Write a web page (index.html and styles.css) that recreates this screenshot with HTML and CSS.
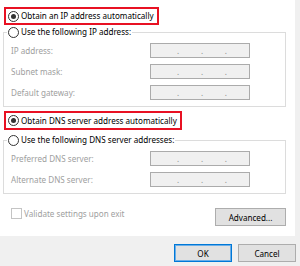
FILE: index.html
```html
<!DOCTYPE html>
<html lang="en">
<head>
  <meta charset="UTF-8">
  <title>IPv4 Properties</title>
  <link rel="stylesheet" href="styles.css">
</head>
<body>
  <div class="dialog">
    <div class="page">
      <label class="choice marked"><span class="radio checked"></span>Obtain an IP address automatically</label>

      <fieldset class="group">
        <legend class="choice"><span class="radio"></span>Use the following IP address:</legend>
        <div class="field">
          <span class="label">IP address:</span>
          <span class="ip"><span>.</span><span>.</span><span>.</span></span>
        </div>
        <div class="field">
          <span class="label">Subnet mask:</span>
          <span class="ip"><span>.</span><span>.</span><span>.</span></span>
        </div>
        <div class="field">
          <span class="label">Default gateway:</span>
          <span class="ip"><span>.</span><span>.</span><span>.</span></span>
        </div>
      </fieldset>

      <label class="choice marked second"><span class="radio checked"></span>Obtain DNS server address automatically</label>

      <fieldset class="group dns">
        <legend class="choice"><span class="radio"></span>Use the following DNS server addresses:</legend>
        <div class="field">
          <span class="label">Preferred DNS server:</span>
          <span class="ip"><span>.</span><span>.</span><span>.</span></span>
        </div>
        <div class="field">
          <span class="label">Alternate DNS server:</span>
          <span class="ip"><span>.</span><span>.</span><span>.</span></span>
        </div>
      </fieldset>

      <div class="extras">
        <label class="check"><span class="box"></span>Validate settings upon exit</label>
        <button class="btn advanced">Advanced...</button>
      </div>
    </div>

    <div class="footer">
      <button class="btn default">OK</button>
      <button class="btn">Cancel</button>
    </div>
  </div>
</body>
</html>
```

FILE: styles.css
```css
body {
  margin: 0;
  background: #f0f0f0;
  color: #000;
  font-family: "Noto Sans", "Liberation Sans", sans-serif;
  font-size: 8.1px;
}

.page {
  width: 295px;
  height: 236px;
  box-sizing: border-box;
  padding-top: 7px;
  background: #fff;
}

.choice {
  display: flex;
  align-items: center;
  gap: 2px;
  line-height: 14px;
}

.radio {
  width: 11px;
  height: 11px;
  box-sizing: border-box;
  border: 1px solid #333;
  border-radius: 50%;
  background: #fff;
  display: flex;
  align-items: center;
  justify-content: center;
}

.radio.checked::after {
  content: "";
  width: 5px;
  height: 5px;
  border-radius: 50%;
  background: #333;
}

.marked {
  width: max-content;
  height: 18px;
  box-sizing: border-box;
  margin-left: 4px;
  padding: 0 3px 0 2px;
  border: 2px solid #e81123;
}

.marked.second {
  height: 19px;
  margin-top: 4px;
}

.group {
  width: 283px;
  box-sizing: border-box;
  margin: 0 0 0 3px;
  padding: 4px 35px 6px 7px;
  border: 1px solid #dcdcdc;
}

.group.dns {
  margin-top: 3px;
}

/* legend sits on the frame, just right of its corner */
.group legend {
  margin-left: -4px;
  padding: 0 1px;
}

.field {
  display: flex;
  align-items: center;
  justify-content: space-between;
  height: 15px;
  color: #a0a0a0;
}

.field + .field {
  margin-top: 6px;
}

.ip {
  width: 100px;
  height: 15px;
  box-sizing: border-box;
  display: flex;
  align-items: center;
  justify-content: space-between;
  padding: 0 22px 0 26px;
  border: 1px solid #ababab;
  background: #f0f0f0;
  color: #8c8c8c;
}

.extras {
  display: flex;
  justify-content: space-between;
  align-items: flex-start;
  margin-top: 14px;
  padding: 0 9px 0 11px;
}

.check {
  display: flex;
  align-items: center;
  gap: 2px;
  line-height: 11px;
  color: #a0a0a0;
}

.box {
  width: 11px;
  height: 11px;
  box-sizing: border-box;
  border: 1px solid #c4c4c4;
  background: #fff;
}

.btn {
  height: 18px;
  padding: 0;
  border: 1px solid #adadad;
  background: #e1e1e1;
  color: #000;
  font: inherit;
}

.advanced {
  width: 71px;
}

.footer {
  display: flex;
  justify-content: flex-end;
  gap: 6px;
  padding: 8px 4px 0 0;
}

.footer .btn {
  width: 58px;
}

.btn.default {
  border-color: #0078d7;
  box-shadow: inset 0 0 0 1px #6aaee8;
}
```
